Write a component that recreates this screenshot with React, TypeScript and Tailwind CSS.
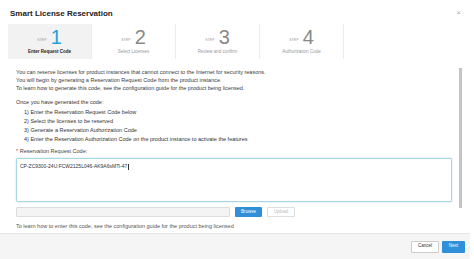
import React from 'react';

const steps = [
  { n: '1', label: 'Enter Request Code', active: true },
  { n: '2', label: 'Select Licenses', active: false },
  { n: '3', label: 'Review and confirm', active: false },
  { n: '4', label: 'Authorization Code', active: false },
];

const listItems = [
  '1) Enter the Reservation Request Code below',
  '2) Select the licenses to be reserved',
  '3) Generate a Reservation Authorization Code',
  '4) Enter the Reservation Authorization Code on the product instance to activate the features',
];

export default function App() {
  return (
    <div className="w-[474px] h-[259px] bg-white relative overflow-hidden font-['Liberation_Sans',Arial,sans-serif] text-[#333]">
      {/* Header */}
      <div className="h-[24px] flex items-center justify-between pl-[10px] pr-[13px]">
        <h2 className="text-[8px] font-bold text-[#222] leading-none pt-[4px]">Smart License Reservation</h2>
        <span className="text-[8px] text-[#aaa] leading-none pt-[2px]">×</span>
      </div>

      {/* Steps */}
      <div className="flex h-[35px] pl-[8px]">
        {steps.map((s) => (
          <div
            key={s.n}
            className={`w-[84px] flex flex-col items-center justify-center border-r border-[#ececec] ${s.active ? 'bg-[#f2f2f2]' : ''}`}
          >
            <div className="flex items-end gap-[4px] h-[18px]">
              <span className="text-[3.5px] text-[#999] leading-none mb-[4px] tracking-wide">STEP</span>
              <span className={`text-[20px] font-light leading-none ${s.active ? 'text-[#1fa2d8]' : 'text-[#888]'}`}>{s.n}</span>
            </div>
            <span className={`mt-[3px] text-[4.5px] leading-none ${s.active ? 'font-bold text-[#222]' : 'text-[#999]'}`}>{s.label}</span>
          </div>
        ))}
      </div>

      {/* Body */}
      <div className="relative pl-[16px] pr-[22px] pt-[9px] text-[5.5px]">
        <div className="leading-[8px] text-[#3a3a3a]">
          <p>You can reserve licenses for product instances that cannot connect to the Internet for security reasons.</p>
          <p>You will begin by generating a Reservation Request Code from the product instance.</p>
          <p>To learn how to generate this code, see the configuration guide for the product being licensed.</p>
        </div>
        <p className="mt-[6px] leading-[9px]">Once you have generated the code:</p>
        <ul className="pl-[8px] leading-[9px] mt-[1px]">
          {listItems.map((t) => (
            <li key={t}>{t}</li>
          ))}
        </ul>
        <p className="mt-[3px] leading-[9px] text-[#444]">
          <span className="text-[#d33]">*</span> Reservation Request Code:
        </p>
        <div className="mt-[2px] h-[44px] border border-[#a9d6e5] rounded-[1px] px-[3px] py-[3px] shadow-[0_0_2px_rgba(102,175,233,0.4)]">
          <span className="text-[5px] text-[#333]">CP-ZC9300-24U:FCW2125L046-AK9A6sMTi-47</span>
          <span className="inline-block w-px h-[6px] bg-[#333] align-middle ml-px" />
        </div>
        <div className="flex items-center gap-[5px] mt-[5px]">
          <div className="w-[214px] h-[10px] bg-[#f4f4f4] border border-[#ddd] rounded-[1px]" />
          <button className="h-[10px] px-[6px] bg-[#2f8fd8] text-white text-[4.5px] rounded-[1px] leading-none">Browse</button>
          <button className="h-[10px] px-[6px] bg-white border border-[#ddd] text-[#bbb] text-[4.5px] rounded-[1px] leading-none">Upload</button>
        </div>
        <p className="mt-[5px] leading-[8px] text-[#555]">To learn how to enter this code, see the configuration guide for the product being licensed</p>

        {/* Scrollbar */}
        <div className="absolute right-[12px] top-[9px] w-[3px] h-[140px] bg-[#c4c4c4]" />
      </div>

      {/* Footer */}
      <div className="absolute left-0 right-[4px] bottom-0 h-[26px] bg-[#f5f5f5] border-t border-[#e6e6e6] flex items-center justify-end gap-[3px] pr-[5px]">
        <button className="h-[12px] w-[28px] bg-white border border-[#ccc] rounded-[1px] text-[4.5px] text-[#333] leading-none">Cancel</button>
        <button className="h-[12px] w-[23px] bg-[#2f8fd8] rounded-[1px] text-[4.5px] text-white leading-none">Next</button>
      </div>
    </div>
  );
}
